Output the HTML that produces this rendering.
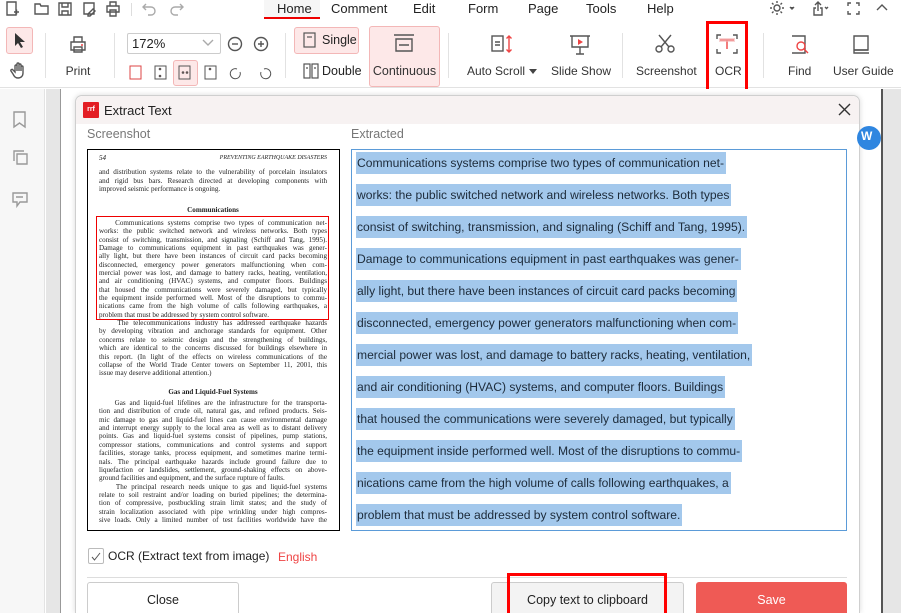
<!DOCTYPE html>
<html style="overflow:hidden;width:901px;height:613px"><head><meta charset="utf-8"><style>
*{box-sizing:border-box;margin:0;padding:0}
body{width:901px;height:613px;overflow:hidden;background:#fff;font-family:"Liberation Sans",sans-serif;position:relative;color:#222}
.a{position:absolute}
.t{font-size:13px;color:#222;white-space:nowrap}
.lb{font-size:12px;color:#333;white-space:nowrap;text-align:center}
.ic{position:absolute;stroke:#555;fill:none;stroke-width:1.4}
.pl{font-family:"Liberation Serif",serif;font-size:7.1px;line-height:8.36px;color:#222;text-align:justify;text-align-last:justify;height:8.36px;overflow:hidden;white-space:nowrap}
.hl{position:absolute;left:356px;height:22px;background:#a3c8ec;font-size:12.1px;line-height:22px;padding-left:1px;padding-right:2px;color:#1d2b3a;white-space:nowrap}
</style></head><body>
<div class="a" style="left:0;top:0;width:901px;height:88px;background:#fff;border-bottom:1px solid #e2e2e2"></div>
<svg class="ic" style="left:4px;top:0" width="125" height="18" viewBox="0 0 125 18">
<path d="M3 2h9v13H3zM10 12h5M12.5 9.5v5"/><path d="M31 4h5l1 2h7v8H31z"/><path d="M55 3h12v12H55zM58 3v4h6V3M58 15v-4h6v4"/><path d="M80 3h10v11H80zM84 14l5-5 2 2-5 5h-2z"/><path d="M103 6h12v6h-12zM106 6V2h6v4M106 10h6v6h-6z"/>
</svg>
<div class="a" style="left:131px;top:3px;width:1px;height:13px;background:#ddd"></div>
<svg class="ic" style="left:140px;top:0;stroke:#aaa" width="50" height="18"><path d="M6 4L3 7l3 3M3 7h8a4 4 0 0 1 0 8H8"/><path d="M40 4l3 3-3 3M43 7h-8a4 4 0 0 0 0 8h3"/></svg>
<div class="a" style="left:264px;top:0;width:56px;height:19px;background:#f6f6f6"></div>
<div class="a t" style="left:277px;top:1px">Home</div>
<div class="a" style="left:264px;top:17px;width:56px;height:2px;background:#e00"></div>
<div class="a t" style="left:331px;top:1px">Comment</div>
<div class="a t" style="left:413px;top:1px">Edit</div>
<div class="a t" style="left:468px;top:1px">Form</div>
<div class="a t" style="left:528px;top:1px">Page</div>
<div class="a t" style="left:586px;top:1px">Tools</div>
<div class="a t" style="left:647px;top:1px">Help</div>
<svg class="ic" style="left:768px;top:0" width="133" height="18"><circle cx="9" cy="8" r="3"/><path d="M9 1v2M9 13v2M2 8h2M14 8h2M4 3l1.5 1.5M14 3l-1.5 1.5M4 13l1.5-1.5M14 13l-1.5-1.5"/><path d="M22 7l2 2 2-2" fill="#555"/><path d="M48 8h-2v7h8V8h-2M50 11V2M47 5l3-3 3 3"/><path d="M57 7l1.5 1.5 1.5-1.5"/><path d="M80 6V3h3M88 3h3v3M91 11v3h-3M83 14h-3v-3"/><path d="M109 10l5-5 5 5"/></svg>
<div class="a" style="left:6px;top:27px;width:27px;height:27px;background:#fde8e8;border:1px solid #f3b7b7;border-radius:3px"></div>
<svg class="a" style="left:13px;top:32px" width="12" height="16"><path d="M2 1v13l3-3 3 5 2-1-3-5h5z" fill="#333"/></svg>
<svg class="ic" style="left:10px;top:62px" width="18" height="18"><path d="M5 10V4a1 1 0 0 1 2 0v5V2a1 1 0 0 1 2 0v7V3a1 1 0 0 1 2 0v6V5a1 1 0 0 1 2 0v6c0 3-2 5-5 5s-4-2-5-4l-2-3a1 1 0 0 1 2-1z"/></svg>
<div class="a" style="left:45px;top:33px;width:1px;height:45px;background:#e2e2e2"></div>
<svg class="ic" style="left:67px;top:34px" width="22" height="20"><path d="M4 8h14v8H4zM7 8V3h8v5M7 13h8v5H7z"/><circle cx="15" cy="11" r="1" fill="#e44" stroke="none"/></svg>
<div class="a lb" style="left:60px;top:64px;width:36px">Print</div>
<div class="a" style="left:114px;top:33px;width:1px;height:45px;background:#e2e2e2"></div>
<div class="a" style="left:127px;top:33px;width:94px;height:21px;border:1px solid #ccc;border-radius:2px;font-size:13px;padding:2px 4px;color:#222">172%</div>
<svg class="ic" style="left:201px;top:38px;stroke:#aaa" width="14" height="10"><path d="M2 2l5 5 5-5"/></svg>
<svg class="ic" style="left:227px;top:35px" width="44" height="18"><circle cx="8" cy="9" r="6.5"/><path d="M5 9h6"/><circle cx="34" cy="9" r="6.5"/><path d="M31 9h6M34 6v6"/></svg>
<div class="a" style="left:173px;top:60px;width:25px;height:26px;background:#fde8e8;border:1px solid #f3b7b7;border-radius:3px"></div>
<svg class="ic" style="left:127px;top:64px;stroke-width:1" width="145" height="18"><rect x="3" y="2" width="11" height="13" stroke="#d44"/><rect x="28" y="2" width="11" height="13"/><rect x="52" y="2" width="11" height="13"/><rect x="78" y="2" width="11" height="13"/><path d="M110 5a5 5 0 1 0 3 3M137 5a5 5 0 1 1-3 3"/><circle cx="33" cy="5" r=".8" fill="#d44"/><circle cx="33" cy="12" r=".8" fill="#d44"/><circle cx="56" cy="8.5" r=".8" fill="#d44"/><circle cx="60" cy="8.5" r=".8" fill="#d44"/><circle cx="83" cy="5" r=".8" fill="#d44"/></svg>
<div class="a" style="left:285px;top:33px;width:1px;height:45px;background:#e2e2e2"></div>
<div class="a" style="left:294px;top:27px;width:65px;height:27px;background:#fde8e8;border:1px solid #f3b7b7;border-radius:3px"></div>
<svg class="ic" style="left:303px;top:32px;stroke-width:1.2" width="14" height="16"><rect x="1" y="1" width="11" height="14"/><path d="M4 5h5"/></svg>
<div class="a t" style="left:322px;top:33px;font-size:12.5px">Single</div>
<svg class="ic" style="left:303px;top:63px;stroke-width:1.2" width="16" height="16"><rect x="1" y="1" width="6" height="14"/><rect x="9" y="1" width="6" height="14"/><path d="M3 5h2M11 5h2"/></svg>
<div class="a t" style="left:322px;top:64px;font-size:12.5px">Double</div>
<div class="a" style="left:369px;top:26px;width:71px;height:61px;background:#fde8e8;border:1px solid #f3b7b7;border-radius:3px"></div>
<svg class="ic" style="left:393px;top:33px" width="24" height="22"><path d="M1 2h20M3 6h16v12H3zM6 12h10"/></svg>
<div class="a lb" style="left:370px;top:64px;width:69px;font-size:12.5px">Continuous</div>
<div class="a" style="left:448px;top:33px;width:1px;height:45px;background:#e2e2e2"></div>
<svg class="ic" style="left:490px;top:33px" width="26" height="22"><rect x="2" y="3" width="11" height="15"/><path d="M5 9h5M5 12h5"/><path d="M19 3v16M16.5 5.5L19 3l2.5 2.5M16.5 16.5L19 19l2.5-2.5" stroke="#e44"/></svg>
<div class="a lb" style="left:467px;top:64px">Auto Scroll</div>
<svg class="a" style="left:529px;top:69px" width="8" height="5"><path d="M0 0h8L4 5z" fill="#444"/></svg>
<svg class="ic" style="left:569px;top:34px" width="22" height="22"><path d="M1 2h20M3 2v11h16V2M11 13v7M7 20h8"/><path d="M9 5l5 3-5 3z" fill="#e44" stroke="none"/></svg>
<div class="a lb" style="left:551px;top:64px">Slide Show</div>
<div class="a" style="left:622px;top:33px;width:1px;height:45px;background:#e2e2e2"></div>
<svg class="ic" style="left:654px;top:34px" width="22" height="20"><circle cx="5" cy="15" r="3"/><circle cx="17" cy="15" r="3"/><path d="M7 13L17 1M15 13L5 1"/></svg>
<div class="a lb" style="left:636px;top:64px">Screenshot</div>
<svg class="ic" style="left:715px;top:33px" width="24" height="22"><path d="M2 6V2h4M18 2h4v4M22 16v4h-4M6 20H2v-4"/><path d="M5 7h14M12 7v9" stroke="#e44"/><rect x="4" y="5" width="16" height="4" fill="#f4b6b6" stroke="none" opacity=".6"/></svg>
<div class="a lb" style="left:715px;top:64px">OCR</div>
<div class="a" style="left:706px;top:21px;width:42px;height:76px;border:3px solid #f00"></div>
<div class="a" style="left:763px;top:33px;width:1px;height:45px;background:#e2e2e2"></div>
<svg class="ic" style="left:790px;top:34px" width="22" height="22"><path d="M2 2h13v17H2"/><circle cx="11" cy="12" r="4" stroke="#e44"/><path d="M14 15l4 4" stroke="#e44"/></svg>
<div class="a lb" style="left:788px;top:64px">Find</div>
<svg class="ic" style="left:851px;top:34px" width="22" height="22"><path d="M3 16V2h14v14zM3 16v3h15"/><path d="M3 16h14"/></svg>
<div class="a lb" style="left:833px;top:64px">User Guide</div>
<div class="a" style="left:0;top:89px;width:45px;height:524px;background:#f7f7f7;border-right:1px solid #e3e3e3"></div>
<svg class="ic" style="left:11px;top:110px;stroke:#999" width="18" height="100"><path d="M3 2h11v15l-5.5-4L3 17z"/><path d="M6 44h10v10H6zM3 51V41h10"/><path d="M2 83h14v9H9l-3 4v-4H2z M5 87h7"/></svg>
<div class="a" style="left:46px;top:89px;width:855px;height:524px;background:#e6e6e6"></div>
<div class="a" style="left:60px;top:89px;width:822px;height:524px;background:#fff;border-left:1px solid #999"></div>
<div class="a" style="left:881px;top:89px;width:2px;height:524px;background:#555"></div>
<div class="a" style="left:75px;top:95px;width:785px;height:518px;background:#fff;border:1px solid #cfcfcf;border-bottom:none;border-radius:7px 7px 0 0;box-shadow:0 0 6px rgba(0,0,0,.15)"></div>
<div class="a" style="left:76px;top:96px;width:783px;height:28px;background:#f7f2f2;border-radius:7px 7px 0 0"></div>
<div class="a" style="left:83px;top:102px;width:16px;height:16px;background:#e31e24;border-radius:1px;color:#fff;font-size:7px;font-weight:bold;line-height:16px;text-align:center">rrf</div>
<div class="a t" style="left:104px;top:103px">Extract Text</div>
<svg class="ic" style="left:838px;top:103px;stroke:#333" width="13" height="13"><path d="M1 1l11 11M12 1L1 12"/></svg>
<div class="a" style="left:76px;top:124px;width:783px;height:489px;background:#fff"></div>
<div class="a" style="left:857px;top:126px;width:24px;height:24px;border-radius:50%;background:#2f86e0"></div>
<div class="a" style="left:861px;top:129px;color:#fff;font-size:12px;font-weight:bold">W</div>
<div class="a t" style="left:87px;top:127px;color:#777;font-size:12.5px">Screenshot</div>
<div class="a t" style="left:351px;top:127px;color:#777;font-size:12.5px">Extracted</div>
<div class="a" style="left:87px;top:149px;width:253px;height:382px;border:1px solid #000;background:#fff;overflow:hidden">
<div class="a" style="left:11px;top:4px;width:228px">
<div class="pl" style="text-align-last:auto;font-style:italic;position:relative">54<span style="position:absolute;right:0;font-size:6px">PREVENTING EARTHQUAKE DISASTERS</span></div>
<div style="height:6px"></div>
<div class="pl">and distribution systems relate to the vulnerability of porcelain insulators</div>
<div class="pl">and rigid bus bars. Research directed at developing components with</div>
<div class="pl" style="text-align-last:auto">improved seismic performance is ongoing.</div>
<div style="height:13px"></div>
<div class="pl" style="text-align:center;text-align-last:center;font-weight:bold">Communications</div>
<div style="height:4px"></div>
<div class="pl">&nbsp;&nbsp;&nbsp;&nbsp;Communications systems comprise two types of communication net-</div>
<div class="pl">works: the public switched network and wireless networks. Both types</div>
<div class="pl">consist of switching, transmission, and signaling (Schiff and Tang, 1995).</div>
<div class="pl">Damage to communications equipment in past earthquakes was gener-</div>
<div class="pl">ally light, but there have been instances of circuit card packs becoming</div>
<div class="pl">disconnected, emergency power generators malfunctioning when com-</div>
<div class="pl">mercial power was lost, and damage to battery racks, heating, ventilation,</div>
<div class="pl">and air conditioning (HVAC) systems, and computer floors. Buildings</div>
<div class="pl">that housed the communications were severely damaged, but typically</div>
<div class="pl">the equipment inside performed well. Most of the disruptions to commu-</div>
<div class="pl">nications came from the high volume of calls following earthquakes, a</div>
<div class="pl" style="text-align-last:auto">problem that must be addressed by system control software.</div>
<div class="pl">&nbsp;&nbsp;&nbsp;&nbsp;The telecommunications industry has addressed earthquake hazards</div>
<div class="pl">by developing vibration and anchorage standards for equipment. Other</div>
<div class="pl">concerns relate to seismic design and the strengthening of buildings,</div>
<div class="pl">which are identical to the concerns discussed for buildings elsewhere in</div>
<div class="pl">this report. (In light of the effects on wireless communications of the</div>
<div class="pl">collapse of the World Trade Center towers on September 11, 2001, this</div>
<div class="pl" style="text-align-last:auto">issue may deserve additional attention.)</div>
<div style="height:10px"></div>
<div class="pl" style="text-align:center;text-align-last:center;font-weight:bold">Gas and Liquid-Fuel Systems</div>
<div style="height:3px"></div>
<div class="pl">&nbsp;&nbsp;&nbsp;&nbsp;Gas and liquid-fuel lifelines are the infrastructure for the transporta-</div>
<div class="pl">tion and distribution of crude oil, natural gas, and refined products. Seis-</div>
<div class="pl">mic damage to gas and liquid-fuel lines can cause environmental damage</div>
<div class="pl">and interrupt energy supply to the local area as well as to distant delivery</div>
<div class="pl">points. Gas and liquid-fuel systems consist of pipelines, pump stations,</div>
<div class="pl">compressor stations, communications and control systems and support</div>
<div class="pl">facilities, storage tanks, process equipment, and sometimes marine termi-</div>
<div class="pl">nals. The principal earthquake hazards include ground failure due to</div>
<div class="pl">liquefaction or landslides, settlement, ground-shaking effects on above-</div>
<div class="pl" style="text-align-last:auto">ground facilities and equipment, and the surface rupture of faults.</div>
<div class="pl">&nbsp;&nbsp;&nbsp;&nbsp;The principal research needs unique to gas and liquid-fuel systems</div>
<div class="pl">relate to soil restraint and/or loading on buried pipelines; the determina-</div>
<div class="pl">tion of compressive, postbuckling strain limit states; and the study of</div>
<div class="pl">strain localization associated with pipe wrinkling under high compres-</div>
<div class="pl">sive loads. Only a limited number of test facilities worldwide have the</div>
</div>
</div>
<div class="a" style="left:96px;top:216px;width:233px;height:104px;border:1.5px solid #e00"></div>
<div class="a" style="left:351px;top:149px;width:496px;height:382px;border:1px solid #5b9bd8"></div>
<div class="hl" style="top:152px">Communications systems comprise two types of communication net-</div>
<div class="hl" style="top:184px">works: the public switched network and wireless networks. Both types</div>
<div class="hl" style="top:216px">consist of switching, transmission, and signaling (Schiff and Tang, 1995).</div>
<div class="hl" style="top:248px">Damage to communications equipment in past earthquakes was gener-</div>
<div class="hl" style="top:280px">ally light, but there have been instances of circuit card packs becoming</div>
<div class="hl" style="top:312px">disconnected, emergency power generators malfunctioning when com-</div>
<div class="hl" style="top:344px">mercial power was lost, and damage to battery racks, heating, ventilation,</div>
<div class="hl" style="top:376px">and air conditioning (HVAC) systems, and computer floors. Buildings</div>
<div class="hl" style="top:408px">that housed the communications were severely damaged, but typically</div>
<div class="hl" style="top:440px">the equipment inside performed well. Most of the disruptions to commu-</div>
<div class="hl" style="top:472px">nications came from the high volume of calls following earthquakes, a</div>
<div class="hl" style="top:504px">problem that must be addressed by system control software.</div>
<div class="a" style="left:88px;top:548px;width:16px;height:16px;border:1px solid #bbb;border-radius:2px"></div>
<svg class="a" style="left:91px;top:552px" width="10" height="9"><path d="M1 5l2.5 3L9 1" stroke="#555" fill="none"/></svg>
<div class="a t" style="left:108px;top:549px;font-size:12px">OCR (Extract text from image)</div>
<div class="a t" style="left:278px;top:550px;font-size:12px;color:#e44">English</div>
<div class="a" style="left:87px;top:577px;width:760px;height:1px;background:#ddd"></div>
<div class="a" style="left:87px;top:582px;width:152px;height:40px;border:1px solid #ccc;border-radius:3px;background:#fff"></div>
<div class="a t" style="left:87px;top:593px;width:152px;text-align:center;font-size:12.5px">Close</div>
<div class="a" style="left:491px;top:582px;width:193px;height:40px;border:1px solid #ccc;border-radius:3px;background:#f3f3f3"></div>
<div class="a t" style="left:491px;top:593px;width:193px;text-align:center;font-size:12.5px">Copy text to clipboard</div>
<div class="a" style="left:696px;top:582px;width:151px;height:40px;border-radius:3px;background:#ef5a55"></div>
<div class="a t" style="left:696px;top:593px;width:151px;text-align:center;color:#fff;font-size:12.5px">Save</div>
<div class="a" style="left:507px;top:573px;width:160px;height:44px;border:3px solid #f00"></div>
</body></html>
